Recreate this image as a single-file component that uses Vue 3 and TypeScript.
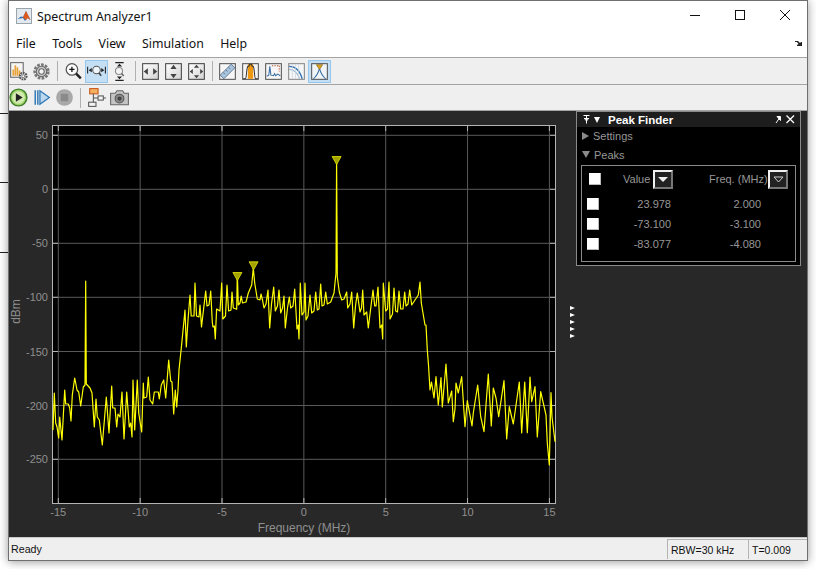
<script setup lang="ts">
const menus = ['File', 'Tools', 'View', 'Simulation', 'Help']

const xTicks = [
  { x: 58.3, label: '-15' },
  { x: 140.15, label: '-10' },
  { x: 222, label: '-5' },
  { x: 303.85, label: '0' },
  { x: 385.7, label: '5' },
  { x: 467.55, label: '10' },
  { x: 549.4, label: '15' },
]
const yTicks = [
  { y: 135.3, label: '50' },
  { y: 189.3, label: '0' },
  { y: 243.3, label: '-50' },
  { y: 297.3, label: '-100' },
  { y: 351.5, label: '-150' },
  { y: 405.5, label: '-200' },
  { y: 459.3, label: '-250' },
]

// read off the screenshot, in page pixels
const trace = `53,430 54.3,393 55.7,423 57,427 58.7,438 59.7,417 62,440 64.7,390 65.7,404 68.3,404 69.7,408 71,421
72.3,395 74.7,378 77,390 78.7,392 80.7,406 83.3,387 85,385 85.7,281 86.3,384 90,388 92,393 94.3,427 96,399 97.3,417
99.3,420 102.3,445 106.3,397 109,433 111.7,386 112.7,408 115,408 116.7,427 118,414 120,417 122,392 124,439 126.7,392
129.3,427 130.7,423 132,437 133,380 134.7,430 137.3,380 138.7,413 141.7,432 143.3,383 144,398 146.7,397 148.3,377
150,400 152.7,404 154.3,392 158.3,392 159.3,399 161.3,385 163.7,380 165.7,398 168.7,360 170.7,381 172,382 173.7,414
175.3,390 176.7,407 178,390 179,370 181.3,348 185,310 186.3,347 188,320 190,295 191.2,316 194,316 195,283 196.5,316
199,317 200,305 201.5,327 203,314 205.7,291 207,306 209,305 210.7,291 212.3,322 213,327 214.4,326 215.3,339 216.6,309
220,311 221.7,283 222.8,319 225.5,316 227,285 228.6,311 231,310 232,292 233.3,308 236.7,309.3 237.3,273 238.3,305
240,303 241.2,296 242.5,303 246,302 248.3,293 251.7,285 253.3,268 254.7,283 257.3,299 260,300 261,294 262.5,300 264,308
266,304 268,290 269.7,328 271.5,304 273.7,287 275.3,311 277.5,306 279,290 280.7,313 282.5,308 284,296 285.3,328
287.5,308 289.3,297 290.7,308 293,306 294.7,289 297,329 298.3,325 299,339 300.3,283 302,315 304,312 305,283 306,320
308,316 310,295 311.7,313 314,311 315.7,292 317.3,310 319,309 320.7,284 322,306 324,305 325.7,292 327.3,304 330.7,302
334,293 336,273 336.6,160 337.3,277 339.3,292 341.7,300 344,299 346.7,292 347.7,308 350,304 351.7,292 353.7,328
355.5,306 357.3,293 360,312 361.5,308 362.7,290 364,315 366.7,312 368.3,328 370.5,310 373,290 374.7,306 376,306 378,287
380,328 381.7,325 382.7,339 383.3,283 385.7,311 387.5,309 389,282 390,319 392.5,314 394,288 395.7,311 397.5,312 399,291
400.7,309 403,309 404.7,292 406,306 408,304 409.7,290 411.7,305 415,300 418.3,295 420,282 421.3,303 425,325 426,325
427.3,350 428.5,365 430,390 431.5,382 434,398 436,376.7 438.3,405 441,377.7 442.3,407 446,364 448.3,403 451.7,391
453.3,421.7 455,409 456,383 458.3,393 461.7,376.7 465,426.7 467.3,400.7 472,426 473.3,413 477.7,385 480.7,416.7
484,431.7 488.3,374 491.3,426 493.3,388 496,398 498.7,416.7 504,380.7 506.7,439 509.3,406.7 513.3,424 519.3,382
521.7,433 524.7,382 527.3,432.7 530,377 531.7,401.7 535,386.7 537.3,437 540.7,391.7 546,415 547.3,443 549.3,465
551,392.7 552,416.7 555,441.7`

const peaks = [
  { x: 237.4, y: 272.5 },
  { x: 253.6, y: 261.8 },
  { x: 336.6, y: 156.5 },
]

const rows = [
  { value: '23.978', freq: '2.000' },
  { value: '-73.100', freq: '-3.100' },
  { value: '-83.077', freq: '-4.080' },
]
</script>

<template>
  <div class="desk">
    <i class="stray" style="top: 113px"></i>
    <i class="stray" style="top: 182px"></i>
    <i class="stray" style="top: 252px"></i>

    <div class="window">
      <header class="titlebar">
        <svg class="app-icon" viewBox="0 0 16 16" width="16" height="16">
          <rect x="0.5" y="0.5" width="15" height="15" fill="#e3e9ee" stroke="#9aa4ad" />
          <path d="M1.5 11 L5 8.5 L7 9 L10 3 L14.5 12 L11.5 10 L9 13 L7 10 Z" fill="#2f6fb0" />
          <path d="M7 9.5 L10 3 L14.5 12 L11.5 10 L10 12 Z" fill="#e2591c" />
        </svg>
        <span class="title">Spectrum Analyzer1</span>
        <div class="win-buttons">
          <span class="win-btn">
            <svg viewBox="0 0 12 12" width="12" height="12"><path d="M1 6.5 H11" stroke="#111" /></svg>
          </span>
          <span class="win-btn">
            <svg viewBox="0 0 12 12" width="12" height="12"><rect x="1.5" y="1.5" width="9" height="9" fill="none" stroke="#111" /></svg>
          </span>
          <span class="win-btn">
            <svg viewBox="0 0 12 12" width="12" height="12"><path d="M1 1 L11 11 M11 1 L1 11" stroke="#111" /></svg>
          </span>
        </div>
      </header>

      <nav class="menubar">
        <span v-for="m in menus" :key="m" class="menu">{{ m }}</span>
        <svg class="dock" viewBox="0 0 8 6" width="8" height="6"><path d="M0 0 H3 L5 2 L6 1 L7 1 V5 H2 V4 L3.5 3 L2 1 H0 Z" fill="#222" /></svg>
      </nav>

      <div class="toolbar tb-first">
        <span class="tool">
          <svg viewBox="0 0 22 22">
            <rect x="3.5" y="2.5" width="12" height="14" fill="#f4f4f4" stroke="#666" />
            <path d="M6 15 V9 M8 15 V5 M10 15 V7 M12 15 V10" stroke="#e8a33a" stroke-width="1.6" />
            <circle cx="15.5" cy="15.5" r="3.2" fill="#ddd" stroke="#555" stroke-width="2" stroke-dasharray="1.6 0.8" />
            <circle cx="15.5" cy="15.5" r="1.4" fill="#fff" stroke="#555" stroke-width="0.7" />
          </svg>
        </span>
        <span class="tool">
          <svg viewBox="0 0 22 22">
            <circle cx="11" cy="11" r="6.6" fill="none" stroke="#777" stroke-width="2.4" stroke-dasharray="2.6 1.2" />
            <circle cx="11" cy="11" r="5" fill="#c9c9c9" stroke="#666" />
            <circle cx="11" cy="11" r="2.6" fill="#f5f5f5" stroke="#666" />
          </svg>
        </span>
        <i class="sep wide"></i>
        <span class="tool">
          <svg viewBox="0 0 22 22">
            <circle cx="9.5" cy="9" r="5.5" fill="#fdfdfd" stroke="#555" stroke-width="1.2" />
            <path d="M7 9 H12 M9.5 6.5 V11.5" stroke="#111" stroke-width="1.2" />
            <path d="M13.5 13 L18 17.5" stroke="#222" stroke-width="2.4" />
          </svg>
        </span>
        <span class="tool on">
          <svg viewBox="0 0 22 22">
            <circle cx="11" cy="9.5" r="3.6" fill="#eef6fb" stroke="#555" />
            <path d="M13.3 12.3 L15.5 15" stroke="#444" stroke-width="1.6" />
            <path d="M2.5 6.5 V13 M19.5 6.5 V13" stroke="#222" />
            <path d="M3.5 9.7 L6.5 7.7 V11.7 Z M18.5 9.7 L15.5 7.7 V11.7 Z" fill="#222" />
          </svg>
        </span>
        <span class="tool">
          <svg viewBox="0 0 22 22">
            <circle cx="10.5" cy="10.5" r="3.4" fill="#f3f3f3" stroke="#888" />
            <path d="M13 13 L15 15.3" stroke="#666" stroke-width="1.5" />
            <path d="M7 2.5 H15 M7 19.5 H15" stroke="#222" />
            <path d="M11 3.5 L8.5 6.3 H13.5 Z M11 18.5 L8.5 15.8 H13.5 Z" fill="#222" />
          </svg>
        </span>
        <i class="sep"></i>
        <span class="tool">
          <svg viewBox="0 0 22 22">
            <rect x="3.5" y="3.5" width="15" height="15" fill="url(#fit-fill)" stroke="#444" />
            <path d="M4.5 11 L8.5 8 V14 Z M17.5 11 L13.5 8 V14 Z" fill="#444" />
            <defs>
              <linearGradient id="fit-fill" x1="0" y1="0" x2="1" y2="1">
                <stop offset="0" stop-color="#fff" />
                <stop offset="1" stop-color="#d2d2d2" />
              </linearGradient>
            </defs>
          </svg>
        </span>
        <span class="tool">
          <svg viewBox="0 0 22 22">
            <rect x="3.5" y="3.5" width="15" height="15" fill="url(#fit-fill)" stroke="#444" />
            <path d="M11 4.5 L8 8.5 H14 Z M11 17.5 L8 13.5 H14 Z" fill="#444" />
          </svg>
        </span>
        <span class="tool">
          <svg viewBox="0 0 22 22">
            <rect x="3.5" y="3.5" width="15" height="15" fill="url(#fit-fill)" stroke="#444" />
            <path d="M4.5 11 L7.5 8.5 V13.5 Z M17.5 11 L14.5 8.5 V13.5 Z M11 4.5 L8.5 7.5 H13.5 Z M11 17.5 L8.5 14.5 H13.5 Z" fill="#444" />
          </svg>
        </span>
        <i class="sep"></i>
        <span class="tool">
          <svg viewBox="0 0 22 22">
            <rect x="3.5" y="3.5" width="15" height="15" fill="#f6f6f6" stroke="#555" />
            <path d="M4 14.5 L14.5 4 L18 7.5 L7.5 18 Z" fill="#a9c3dc" stroke="#4a6a8a" stroke-width="0.8" />
            <path d="M7 12 L8.5 13.5 M9.5 9.5 L11 11 M12 7 L13.5 8.5" stroke="#4a6a8a" stroke-width="0.8" />
          </svg>
        </span>
        <span class="tool">
          <svg viewBox="0 0 22 22">
            <rect x="3.5" y="3.5" width="15" height="15" fill="#f6f6f6" stroke="#555" />
            <rect x="8.5" y="4" width="5" height="14" fill="#f0980f" />
            <path d="M4 18 H6 C7.5 18 7 7 8.5 6 H9.5 L10 4 H12 L12.5 6 H13.5 C15 7 14.5 18 16 18 H18" fill="none" stroke="#333" stroke-width="1" />
          </svg>
        </span>
        <span class="tool">
          <svg viewBox="0 0 22 22">
            <rect x="3.5" y="3.5" width="15" height="15" fill="#f6f6f6" stroke="#555" />
            <path d="M4.5 15.5 L6.5 14.5 L7.5 6 L8.5 14.5 L11 15 L12 13 L13 15 L15 13.5 L17.5 15" fill="none" stroke="#3a6ea5" />
            <path d="M9.5 5.5 H16.5 M16.5 5.5 V11" stroke="#c0492b" stroke-dasharray="1.2 1.2" />
          </svg>
        </span>
        <span class="tool">
          <svg viewBox="0 0 22 22">
            <rect x="3.5" y="3.5" width="15" height="15" fill="#f6f6f6" stroke="#888" />
            <path d="M4 6 C10 6 14 9 16.5 18" fill="none" stroke="#2f6fb0" stroke-width="1.2" />
            <path d="M4 9 C9 9 12 12 14 18" fill="none" stroke="#8fb3d3" />
            <path d="M7 4 V18 M10 4 V18 M13 4 V18" stroke="#c8d4dd" stroke-width="0.7" />
          </svg>
        </span>
        <span class="tool on">
          <svg viewBox="0 0 22 22">
            <rect x="3.5" y="3.5" width="15" height="15" fill="#f1f5f7" stroke="#555" />
            <path d="M5 18 C9 15 10 12 11 8 C12 12 13 15 17 18" fill="none" stroke="#3a6ea5" />
            <path d="M8 4.5 H14 L11 9 Z" fill="#e0a520" stroke="#7a5a10" stroke-width="0.6" />
          </svg>
        </span>
      </div>

      <div class="toolbar tb-second">
        <span class="tool">
          <svg viewBox="0 0 22 22">
            <circle cx="11" cy="11" r="8" fill="#9ed36a" stroke="#3f7f2a" stroke-width="1.4" />
            <circle cx="11" cy="11" r="6" fill="#d3eab0" />
            <path d="M8.5 7 L15 11 L8.5 15 Z" fill="#222" />
          </svg>
        </span>
        <span class="tool">
          <svg viewBox="0 0 22 22">
            <path d="M5 4 V18 M7.5 4 V18" stroke="#2f78b7" stroke-width="1.4" />
            <path d="M9.5 4.5 L18.5 11 L9.5 17.5 Z" fill="#bcd8ee" stroke="#2f78b7" stroke-width="1.2" />
          </svg>
        </span>
        <span class="tool">
          <svg viewBox="0 0 22 22">
            <circle cx="11" cy="11" r="8" fill="#a9a9a9" />
            <rect x="7.5" y="7.5" width="7" height="7" fill="#8a8a8a" />
          </svg>
        </span>
        <i class="sep wide"></i>
        <span class="tool">
          <svg viewBox="0 0 22 22">
            <rect x="4.5" y="2.5" width="8" height="5" fill="#f3b060" stroke="#c9541a" />
            <rect x="12.5" y="9.5" width="5" height="4" fill="#f5f5f5" stroke="#555" />
            <rect x="3.5" y="15.5" width="7" height="4" fill="#f5f5f5" stroke="#555" />
            <path d="M8 7.5 V11.5 H12.5 M8 11.5 V15.5 M17.5 11.5 H20" fill="none" stroke="#555" />
          </svg>
        </span>
        <span class="tool">
          <svg viewBox="0 0 22 22">
            <path d="M2.5 7 H7 L8.5 4.5 H14 L15.5 7 H19.5 V18 H2.5 Z" fill="#c4c4c4" stroke="#666" />
            <circle cx="11" cy="12" r="4.2" fill="#8a8a8a" stroke="#555" />
            <circle cx="11" cy="12" r="2" fill="#444" />
          </svg>
        </span>
      </div>

      <main class="scope">
        <svg class="plot" viewBox="9 111 560 426" width="560" height="426">
          <rect x="52.5" y="125.5" width="503" height="378" fill="#000" />
          <g stroke="#5a5a5a" stroke-width="1">
            <line v-for="t in xTicks" :key="t.label" :x1="t.x" :x2="t.x" y1="125.5" y2="503.5" />
            <line v-for="t in yTicks" :key="t.label" x1="52.5" x2="555.5" :y1="t.y" :y2="t.y" />
          </g>
          <g stroke="#b4b4b4" stroke-width="1">
            <template v-for="t in xTicks" :key="t.label">
              <line :x1="t.x" :x2="t.x" y1="125.5" y2="131" />
              <line :x1="t.x" :x2="t.x" y1="498" y2="503.5" />
            </template>
            <template v-for="t in yTicks" :key="t.label">
              <line x1="52.5" x2="58" :y1="t.y" :y2="t.y" />
              <line x1="550" x2="555.5" :y1="t.y" :y2="t.y" />
            </template>
          </g>
          <rect x="52.5" y="125.5" width="503" height="378" fill="none" stroke="#b4b4b4" />
          <polyline :points="trace" fill="none" stroke="#ffff00" stroke-width="1.2" stroke-linejoin="round" />
          <path
            v-for="p in peaks"
            :key="p.x"
            :d="`M${p.x - 4.5} ${p.y} H${p.x + 4.5} L${p.x} ${p.y + 8} Z`"
            fill="#a3a300"
            stroke="#e6e600"
            stroke-width="0.8"
          />
          <g class="tick-text">
            <text v-for="t in yTicks" :key="t.label" x="48" :y="t.y + 4" text-anchor="end">{{ t.label }}</text>
            <text v-for="t in xTicks" :key="t.label" :x="t.x" y="516" text-anchor="middle">{{ t.label }}</text>
            <text class="axis-name" x="304" y="532" text-anchor="middle">Frequency (MHz)</text>
            <text class="axis-name" transform="translate(20 311.5) rotate(-90)" text-anchor="middle">dBm</text>
          </g>
        </svg>

        <div class="collapse">
          <i v-for="n in 5" :key="n"></i>
        </div>

        <section class="panel">
          <div class="panel-head">
            <svg viewBox="0 0 18 9" width="18" height="9">
              <path d="M0.5 0.5 H6.5 M3.5 1 V8.5 M1 3.5 H6 M1.5 3.5 L3.5 6 L5.5 3.5" fill="none" stroke="#fff" />
              <path d="M11 2 H17 L14 8 Z" fill="#fff" />
            </svg>
            <span class="panel-title">Peak Finder</span>
            <svg class="head-right" viewBox="0 0 20 9" width="20" height="9">
              <path d="M1 8 L4.5 3 M2 1.5 H5.5 V5.5 Z" fill="#fff" stroke="#fff" />
              <path d="M11.5 0.5 L19 8 M19 0.5 L11.5 8" stroke="#fff" stroke-width="1.3" />
            </svg>
          </div>
          <div class="section"><i class="arrow-right"></i>Settings</div>
          <div class="section"><i class="arrow-down"></i>Peaks</div>
          <div class="peaks">
            <div class="peaks-head">
              <i class="check"></i>
              <span class="head-value">Value</span>
              <span class="sort"><i class="sort-solid"></i></span>
              <span class="head-freq">Freq. (MHz)</span>
              <span class="sort">
                <svg viewBox="0 0 11 7" width="11" height="7"><path d="M1 1 H10 L5.5 6 Z" fill="none" stroke="#ccc" /></svg>
              </span>
            </div>
            <div v-for="r in rows" :key="r.value" class="peak-row">
              <i class="check"></i>
              <span class="cell-value">{{ r.value }}</span>
              <span class="cell-freq">{{ r.freq }}</span>
            </div>
          </div>
        </section>
      </main>

      <footer class="statusbar">
        <span class="ready">Ready</span>
        <span class="status-cell rbw">RBW=30 kHz</span>
        <span class="status-cell time">T=0.009</span>
      </footer>
    </div>
  </div>
</template>

<style scoped>
.desk {
  position: relative;
  width: 816px;
  height: 569px;
  overflow: hidden;
  background: #fff;
}

.stray {
  position: absolute;
  left: 0;
  width: 8px;
  height: 1px;
  background: #222;
}

.window {
  position: relative;
  margin-left: 8px;
  width: 800px;
  height: 561px;
  box-sizing: border-box;
  border: 1px solid #6f6f6f;
  display: flex;
  flex-direction: column;
  background: #fff;
  box-shadow: 0 1px 9px rgba(0, 0, 0, 0.4);
  font-family: "Noto Sans", "Liberation Sans", sans-serif;
  color: #111;
}

.titlebar {
  height: 27px;
  display: flex;
  align-items: center;
  padding-left: 7px;
  flex: none;
}

.app-icon {
  margin-top: 3px;
}

.title {
  margin-left: 5px;
  font-size: 12.3px;
  margin-top: 3px;
}

.win-buttons {
  margin-left: auto;
  display: flex;
}

.win-btn {
  width: 45px;
  height: 27px;
  display: flex;
  align-items: center;
  justify-content: center;
}

.menubar {
  height: 29px;
  flex: none;
  display: flex;
  align-items: center;
  gap: 16.5px;
  padding: 2px 0 0 7px;
  box-sizing: border-box;
}

.menu {
  font-size: 12.3px;
}

.dock {
  margin-left: auto;
  margin-right: 4px;
}

.toolbar {
  flex: none;
  box-sizing: border-box;
  display: flex;
  align-items: center;
  background: #efefef;
  border-top: 1px solid #a4a4a4;
  padding-left: 0;
}

.tb-first {
  height: 27px;
}

.tb-second {
  height: 27px;
  border-bottom: 1px solid #a4a4a4;
}

.tool {
  width: 23px;
  height: 23px;
  box-sizing: border-box;
  display: flex;
  align-items: center;
  justify-content: center;
  flex: none;
}

.tool:first-child {
  margin-left: -2px;
}

.tool svg {
  width: 23px;
  height: 23px;
}

.tool.on {
  background: #c4def3;
  outline: 1px solid #95c6ee;
  outline-offset: -1px;
}

.sep {
  width: 1px;
  height: 20px;
  margin: 0 3.5px;
  background: #b0b0b0;
  flex: none;
}

.sep.wide {
  margin: 0 4px;
}

.scope {
  flex: 1;
  min-height: 0;
  display: flex;
  background: #282828;
}

.plot {
  flex: none;
  display: block;
}

.tick-text {
  font-family: "Liberation Sans", Arial, sans-serif;
  font-size: 11px;
  fill: #8f8f8f;
}

.axis-name {
  font-size: 12px;
}

.collapse {
  width: 7px;
  flex: none;
  display: flex;
  flex-direction: column;
  gap: 3px;
  padding-top: 195px;
  box-sizing: border-box;
}

.collapse i {
  width: 0;
  height: 0;
  margin-left: 1px;
  border-left: 5px solid #fff;
  border-top: 2.5px solid transparent;
  border-bottom: 2.5px solid transparent;
}

.panel {
  width: 225px;
  height: 155px;
  flex: none;
  box-sizing: border-box;
  border: 1px solid #8a8a8a;
  background: #000;
  font-family: "Liberation Sans", Arial, sans-serif;
  font-size: 11px;
  color: #979797;
}

.panel-head {
  height: 15px;
  margin-bottom: -1px;
  display: flex;
  align-items: center;
  padding-left: 6px;
  background: #1d1d1d;
}

.panel-title {
  margin-left: 7px;
  font-size: 11.5px;
  font-weight: 700;
  color: #fff;
}

.head-right {
  margin-left: auto;
  margin-right: 5px;
}

.section {
  height: 19px;
  display: flex;
  align-items: center;
  padding-left: 5px;
  gap: 4px;
}

.arrow-right {
  border-left: 7px solid #8a8a8a;
  border-top: 4px solid transparent;
  border-bottom: 4px solid transparent;
}

.arrow-down {
  border-top: 7px solid #8a8a8a;
  border-left: 4px solid transparent;
  border-right: 4px solid transparent;
}

.peaks {
  margin: 1px 4px 0;
  height: 97px;
  box-sizing: border-box;
  border: 1px solid #8a8a8a;
}

.peaks-head {
  display: flex;
  align-items: center;
  height: 20px;
  margin-top: 3px;
  margin-bottom: 5px;
  padding-left: 7px;
}

.check {
  width: 12px;
  height: 12px;
  background: #fff;
  flex: none;
  box-shadow: inset -1px -1px 0 #bbb;
}

.head-value {
  margin-left: 22px;
  width: 30px;
}

.head-freq {
  margin-left: 36px;
  width: 59px;
  white-space: nowrap;
}

.sort {
  width: 20px;
  height: 19px;
  box-sizing: border-box;
  border: 2px solid;
  border-color: #f0f0f0 #777 #777 #f0f0f0;
  display: flex;
  align-items: center;
  justify-content: center;
  flex: none;
  background: #222;
}

.sort-solid {
  border-top: 5px solid #f0f0f0;
  border-left: 5px solid transparent;
  border-right: 5px solid transparent;
}

.peak-row {
  display: flex;
  align-items: center;
  height: 20px;
  padding-left: 5px;
}

.cell-value {
  width: 72px;
  text-align: right;
}

.cell-freq {
  width: 90px;
  text-align: right;
}

.statusbar {
  height: 23px;
  flex: none;
  display: flex;
  align-items: center;
  box-sizing: border-box;
  background: #efefef;
  border-top: 1px solid #c8c8c8;
  font-family: "Liberation Sans", Arial, sans-serif;
  color: #111;
}

.ready {
  margin-left: 2px;
  font-size: 10.7px;
  margin-right: auto;
}

.status-cell {
  height: 20px;
  box-sizing: border-box;
  display: flex;
  align-items: center;
  padding-left: 3px;
  font-size: 10.5px;
  border-left: 1px solid #b4b4b4;
  border-top: 1px solid #b4b4b4;
}

.rbw {
  width: 81px;
}

.time {
  width: 59px;
}
</style>

<style>
html,
body {
  margin: 0;
  background: #fff;
}
</style>
